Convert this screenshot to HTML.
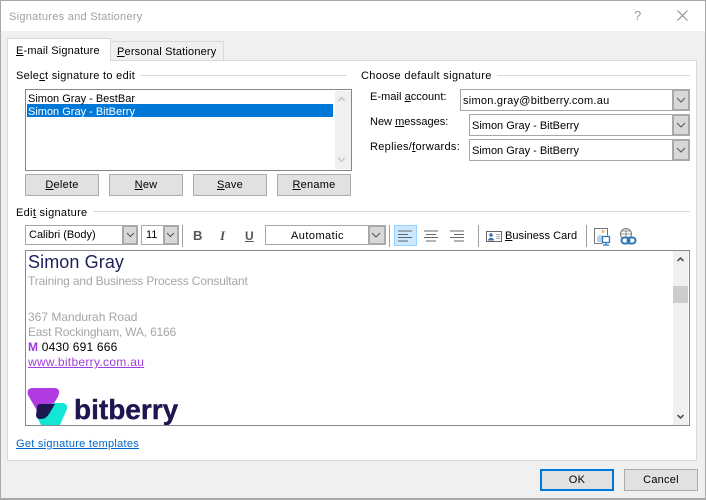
<!DOCTYPE html>
<html><head><meta charset="utf-8"><style>
html,body{margin:0;padding:0;background:#f0f0f0}
#w{position:relative;width:706px;height:500px;overflow:hidden;background:#f0f0f0;font:11px/14px "Liberation Sans",sans-serif;color:#000}
#w div{position:absolute;box-sizing:border-box}
.t{white-space:nowrap;height:14px;line-height:16px}
.t u{text-decoration:underline}
.b{background:#e1e1e1;border:1px solid #adadad;text-align:center;line-height:21px;white-space:nowrap;letter-spacing:.25px}
.c{background:#fff;border:1px solid #a6a6a6;}
.d{background:#d8d8d8;border:2px solid #a9a9a9;width:18px}
.l{height:1px;background:#dcdcdc}
.s{width:1px;background:#a0a0a0}
#w .g{font-size:12px;line-height:14px}
#w .k{line-height:14px}
svg{position:absolute;overflow:visible}
</style></head><body><div id="w">
<div style="left:0;top:0;width:706px;height:31px;background:#fff"></div>
<div class="t" style="left:9px;top:9px;color:#a0a0a0;letter-spacing:.28px">Signatures and Stationery</div>
<div class="t k" style="left:634px;top:9px;color:#999;font-size:13px">?</div>
<svg style="left:0;top:0" width="706" height="31"><path d="M677.500 10.500l10 10M687.500 10.500l-10 10" stroke="#888" fill="none"/></svg>

<div style="left:7px;top:60px;width:690px;height:401px;background:#fff;border:1px solid #d9d9d9"></div>
<div style="left:110px;top:41px;width:114px;height:20px;background:#f0f0f0;border:1px solid #d9d9d9"></div>
<div style="left:7px;top:38px;width:104px;height:23px;background:#fff;border:1px solid #d9d9d9;border-bottom:0"></div>
<div class="t" style="left:16px;top:43px;letter-spacing:.15px"><u>E</u>-mail Signature</div>
<div class="t" style="left:117px;top:44px;letter-spacing:.18px"><u>P</u>ersonal Stationery</div>

<div class="t" style="left:16px;top:68px;letter-spacing:.3px">Sele<u>c</u>t signature to edit</div>
<div class="l" style="left:140px;top:75px;width:207px"></div>
<div style="left:25px;top:89px;width:327px;height:82px;background:#fff;border:1px solid #828790"></div>
<div style="left:335px;top:91px;width:16px;height:78px;background:#f0f0f0"></div>
<svg style="left:0;top:0" width="706" height="200"><path d="M338.500 101l3-3.500 3 3.500M338.500 158l3 3.500 3-3.500" stroke="#c8c8c8" stroke-width="1.600" fill="none"/></svg>
<div style="left:27px;top:104px;width:306px;height:13px;background:#0078d7"></div>
<div class="t" style="left:28px;top:91px">Simon Gray - BestBar</div>
<div class="t" style="left:28px;top:104px;color:#fff">Simon Gray - BitBerry</div>
<div class="b" style="left:25px;top:174px;width:74px;height:22px"><u>D</u>elete</div>
<div class="b" style="left:109px;top:174px;width:74px;height:22px"><u>N</u>ew</div>
<div class="b" style="left:193px;top:174px;width:74px;height:22px"><u>S</u>ave</div>
<div class="b" style="left:277px;top:174px;width:74px;height:22px"><u>R</u>ename</div>

<div class="t" style="left:361px;top:68px;letter-spacing:.35px">Choose default signature</div>
<div class="l" style="left:497px;top:75px;width:193px"></div>
<div class="t" style="left:370px;top:89px;letter-spacing:.05px">E-mail <u>a</u>ccount:</div>
<div class="t" style="left:370px;top:114px">New <u>m</u>essages:</div>
<div class="t" style="left:370px;top:139px;letter-spacing:.3px">Replies/<u>f</u>orwards:</div>
<div class="c" style="left:460px;top:89px;width:230px;height:22px"></div>
<div class="c" style="left:469px;top:114px;width:221px;height:22px"></div>
<div class="c" style="left:469px;top:139px;width:221px;height:22px"></div>
<div class="d" style="left:672px;top:89px;height:22px"></div>
<div class="d" style="left:672px;top:114px;height:22px"></div>
<div class="d" style="left:672px;top:139px;height:22px"></div>
<svg style="left:0;top:0" width="706" height="200"><path d="M677 98l4 4 4-4M677 123l4 4 4-4M677 148l4 4 4-4" stroke="#555" fill="none"/></svg>
<div class="t" style="left:463px;top:93px;letter-spacing:.25px">simon.gray@bitberry.com.au</div>
<div class="t" style="left:472px;top:118px">Simon Gray - BitBerry</div>
<div class="t" style="left:472px;top:143px">Simon Gray - BitBerry</div>

<div class="t" style="left:16px;top:205px;letter-spacing:.3px">Edi<u>t</u> signature</div>
<div class="l" style="left:93px;top:211px;width:597px"></div>

<div class="c" style="left:25px;top:225px;width:113px;height:20px"></div>
<div class="d" style="left:122px;top:225px;height:20px;width:16px"></div>
<div class="t" style="left:29px;top:227px">Calibri (Body)</div>
<div class="c" style="left:141px;top:225px;width:38px;height:20px"></div>
<div class="d" style="left:163px;top:225px;height:20px;width:16px"></div>
<div class="t" style="left:146px;top:227px">11</div>
<div class="s" style="left:182px;top:225px;height:22px"></div>
<div class="t k" style="left:193px;top:229px;font-weight:bold;font-size:13px;color:#555">B</div>
<div class="t k" style="left:220px;top:229px;font-style:italic;font-weight:bold;font-size:13px;color:#555;font-family:'Liberation Serif',serif">I</div>
<div class="t k" style="left:245px;top:229px;font-weight:bold;font-size:12px;color:#555"><u>U</u></div>
<div class="c" style="left:265px;top:225px;width:121px;height:20px"></div>
<div class="d" style="left:368px;top:225px;height:20px"></div>
<div class="t" style="left:265px;top:228px;width:105px;text-align:center;letter-spacing:.45px">Automatic</div>
<div class="s" style="left:389px;top:225px;height:22px"></div>
<div style="left:394px;top:225px;width:23px;height:21px;background:#cce8ff;border:1px solid #99d1ff"></div>
<svg style="left:0;top:0" width="706" height="260">
<path d="M127 233l3.500 3.500 3.500-3.500M167 233l3.500 3.500 3.500-3.500M372 233l4 4 4-4" stroke="#555" fill="none"/>
<path d="M398 231h14M398 234.500h10M398 237.500h14M398 241h10M424 231h14M426 234.500h10M424 237.500h14M426 241h10M450 231h14M454 234.500h10M450 237.500h14M454 241h10" stroke="#666" fill="none"/>
<rect x="486.500" y="231.500" width="15" height="10" fill="#fff" stroke="#666"/><circle cx="491" cy="235" r="1.800" fill="#3f6fa8"/><path d="M488 240.500c0-3.500 6-3.500 6 0z" fill="#3f6fa8"/><path d="M496 234.500h4M496 236.500h4M496 238.500h4" stroke="#aaa" fill="none"/>
<path d="M594.500 243.500v-15h13v7" fill="#fff" stroke="#777"/><path d="M594.500 243.500h8" stroke="#777" fill="none"/><path d="M597 242v-5l3-2.500 3 2.500v5z" fill="#bcd0e6"/><circle cx="603" cy="231.500" r="1.500" fill="#f2b36b"/>
<rect x="602.500" y="236.500" width="7" height="6" fill="#fff" stroke="#2f78b7" stroke-width="1.300"/><path d="M606 243v1.500M603 245h6" stroke="#2f78b7" stroke-width="1.200" fill="none"/>
<circle cx="626" cy="234" r="5.500" fill="#fff" stroke="#777"/><path d="M620.500 234h11M626 228.500v8M622 231h8" stroke="#777" stroke-width=".8" fill="none"/>
<rect x="621.500" y="237.500" width="8" height="6" rx="3" fill="#fff" stroke="#2f78b7" stroke-width="2"/><rect x="627.500" y="237.500" width="8" height="6" rx="3" fill="none" stroke="#2f78b7" stroke-width="2"/>
</svg>
<div class="s" style="left:478px;top:225px;height:22px"></div>
<div class="t" style="left:505px;top:228px;letter-spacing:.05px"><u>B</u>usiness Card</div>
<div class="s" style="left:586px;top:225px;height:22px"></div>

<div style="left:25px;top:250px;width:665px;height:176px;background:#fff;border:1px solid #828790;overflow:hidden"></div>
<div style="left:673px;top:251px;width:15px;height:174px;background:#f0f0f0"></div>
<div style="left:673px;top:286px;width:15px;height:17px;background:#cdcdcd"></div>
<svg style="left:0;top:0" width="706" height="430"><path d="M677.500 261l3-3 3 3M677.500 415l3 3 3-3" stroke="#555" stroke-width="1.600" fill="none"/></svg>
<div class="t" style="left:28px;top:253px;font-size:18px;line-height:18px;height:18px;color:#1f1f5a;letter-spacing:.1px">Simon Gray</div>
<div class="t g" style="left:28px;top:274px;color:#a6a6a6;letter-spacing:-.15px">Training and Business Process Consultant</div>
<div class="t g" style="left:28px;top:310px;color:#a6a6a6">367 Mandurah Road</div>
<div class="t g" style="left:28px;top:325px;color:#a6a6a6;letter-spacing:-.2px">East Rockingham, WA, 6166</div>
<div class="t g" style="left:28px;top:340px;letter-spacing:.2px"><b style="color:#9b3fd8">M</b> 0430 691 666</div>
<div class="t g" style="left:28px;top:355px;color:#a03fd8;letter-spacing:.3px"><u>www.bitberry.com.au</u></div>
<svg style="left:0;top:0" width="706" height="500">
<clipPath id="cp"><rect x="26" y="251" width="647" height="174"/></clipPath>
<g clip-path="url(#cp)">
<path d="M33 388h21q6 0 5 6q-1 3-3 6l-10 16q-3 3-6 0l-12-21q-2-7 5-7z" fill="#b03be0"/>
<path d="M53 403h10q5 1 4 6l-7 16h-19l-5-10z" fill="#14e6d6"/>
<path d="M40 404h15l-6 10q-3 5-8 5h-2q-3-1-3-4l1-7q0-4 3-4z" fill="#1e1650"/>
<text x="74" y="419" font-family="Liberation Sans" font-weight="bold" font-size="28" fill="#1e1650" stroke="#1e1650" stroke-width=".4">bitberry</text>
</g></svg>
<div class="t" style="left:16px;top:436px;color:#0066cc;letter-spacing:.27px"><u>Get signature templates</u></div>

<div class="b" style="left:540px;top:469px;width:74px;height:22px;border:2px solid #0078d7;line-height:19px">OK</div>
<div class="b" style="left:624px;top:469px;width:74px;height:22px">Cancel</div>
<div style="left:0;top:0;width:706px;height:500px;border:1px solid #a8a8a8;border-bottom-width:2px"></div>
</div></body></html>
